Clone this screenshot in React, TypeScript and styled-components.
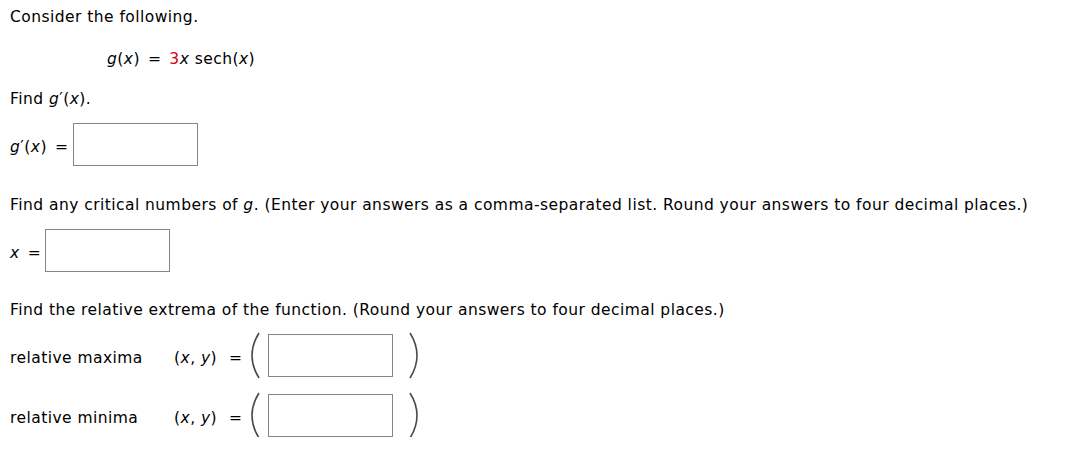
import React from "react";
import styled, { createGlobalStyle } from "styled-components";

const Global = createGlobalStyle`
  html, body { margin: 0; padding: 0; background: #fff; }
  body {
    font-family: "DejaVu Sans", Verdana, sans-serif;
    font-size: 15.5px;
    letter-spacing: 0.45px;
    color: #000;
  }
`;

const Page = styled.div`
  display: flex;
  flex-direction: column;
  padding: 7px 10px 0 10px;
`;

const Para = styled.div<{ $top?: number; $indent?: number }>`
  line-height: 20px;
  height: 20px;
  margin-top: ${(p) => p.$top ?? 0}px;
  padding-left: ${(p) => p.$indent ?? 0}px;
  white-space: nowrap;
`;

const V = styled.i`
  font-style: italic;
`;

const Red = styled.span`
  color: #d0021b;
`;

const Eq = styled.span<{ $l?: number; $r?: number }>`
  margin-left: ${(p) => p.$l ?? 8}px;
  margin-right: ${(p) => p.$r ?? 8}px;
`;

const Row = styled.div<{ $top: number }>`
  display: flex;
  align-items: center;
  margin-top: ${(p) => p.$top}px;
  height: 43px;
  white-space: nowrap;
`;

const Label = styled.span<{ $w?: number }>`
  display: inline-block;
  width: ${(p) => (p.$w ? `${p.$w}px` : "auto")};
  padding-top: 5px;
`;

const Box = styled.div`
  box-sizing: border-box;
  width: 125px;
  height: 43px;
  border: 1px solid #858585;
  background: #fff;
`;

const Paren = styled.svg`
  width: 12px;
  height: 47px;
  flex: none;
`;

const Pair = styled.div`
  display: flex;
  align-items: center;
  gap: 6px;
`;

const Spacer = styled.span`
  width: 2px;
`;

function LParen() {
  return (
    <Paren viewBox="0 0 12 47">
      <path d="M9 1 Q2 12 2 23.5 Q2 35 9 46" fill="none" stroke="#4a4a4a" strokeWidth="1.6" />
    </Paren>
  );
}
function RParen() {
  return (
    <Paren viewBox="0 0 12 47">
      <path d="M3 1 Q10 12 10 23.5 Q10 35 3 46" fill="none" stroke="#4a4a4a" strokeWidth="1.6" />
    </Paren>
  );
}

function Point() {
  return (
    <Pair>
      <LParen />
      <Box />
      <Spacer />
      <RParen />
    </Pair>
  );
}

export default function App() {
  return (
    <>
      <Global />
      <Page>
        <Para>Consider the following.</Para>
        <Para $top={22} $indent={97}>
          <V>g</V>(<V>x</V>)<Eq>=</Eq>
          <Red>3</Red>
          <V>x</V> sech(<V>x</V>)
        </Para>
        <Para $top={20}>
          Find <V>g</V>′(<V>x</V>).
        </Para>
        <Row $top={14}>
          <Label>
            <V>g</V>′(<V>x</V>)<Eq $r={5}>=</Eq>
          </Label>
          <Box />
        </Row>
        <Para $top={29}>
          Find any critical numbers of <V>g</V>. (Enter your answers as a comma-separated list. Round your
          answers to four decimal places.)
        </Para>
        <Row $top={14}>
          <Label>
            <V>x</V>
            <Eq $r={4}>=</Eq>
          </Label>
          <Box />
        </Row>
        <Para $top={28}>
          Find the relative extrema of the function. (Round your answers to four decimal places.)
        </Para>
        <Row $top={14}>
          <Label $w={164}>relative maxima</Label>
          <Label>
            (<V>x</V>, <V>y</V>)<Eq $l={12}>=</Eq>
          </Label>
          <Point />
        </Row>
        <Row $top={17}>
          <Label $w={164}>relative minima</Label>
          <Label>
            (<V>x</V>, <V>y</V>)<Eq $l={12}>=</Eq>
          </Label>
          <Point />
        </Row>
      </Page>
    </>
  );
}
